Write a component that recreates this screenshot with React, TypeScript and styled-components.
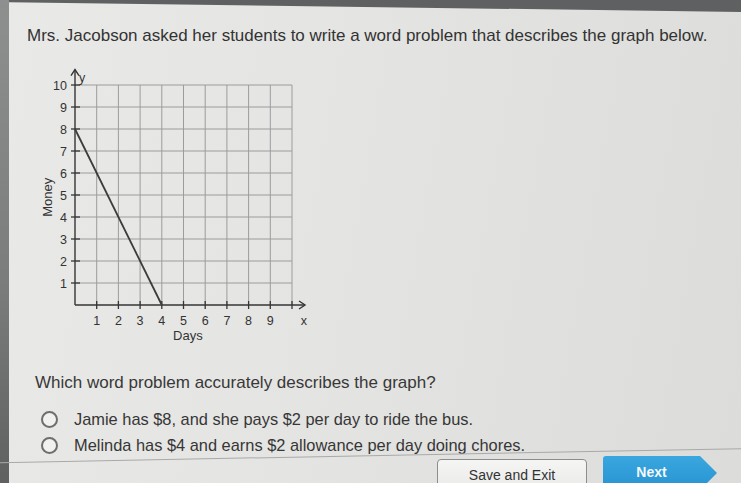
import React from 'react'
import styled, { createGlobalStyle } from 'styled-components'

const GlobalStyle = createGlobalStyle`
  html, body {
    margin: 0;
    padding: 0;
    background: #dfdfdd;
  }
  body {
    font-family: 'Liberation Sans', Arial, sans-serif;
    color: #363636;
  }
`

const Screen = styled.div`
  display: flex;
  width: 741px;
  height: 483px;
  overflow: hidden;
  background: linear-gradient(100deg, #e9e9e7 0%, #e4e4e2 45%, #dcdcda 100%);
`

// the dark monitor bezel on the left edge of the photo
const Bezel = styled.div`
  flex: 0 0 9px;
  background: linear-gradient(180deg, #8e8f8f 0%, #7a7b7b 60%, #5f6060 100%);
`

const Main = styled.div`
  flex: 1;
  display: flex;
  flex-direction: column;
  min-width: 0;

  & > * {
    flex-shrink: 0;
  }
`

const TopBand = styled.div`
  height: 12px;
  background: #5e6061;
  clip-path: polygon(0 0, 100% 0, 100% 100%, 0 18%);
`

const Title = styled.h1`
  margin: 14px 0 0 18px;
  font-size: 17px;
  line-height: 20px;
  font-weight: normal;
  color: #333;
  white-space: nowrap;
`

const GraphWrap = styled.div`
  margin: 14px 0 0 11px;
  width: 300px;
  height: 285px;
`

const Label = styled.text<{ size?: number }>`
  font-family: 'Liberation Sans', Arial, sans-serif;
  font-size: ${({ size }) => size ?? 12.5}px;
  fill: #333;
`

const Question = styled.p`
  margin: 28px 0 0 26px;
  font-size: 17px;
  line-height: 20px;
  color: #383838;
`

const Options = styled.ul`
  list-style: none;
  margin: 13px 0 0 32px;
  padding: 0;
`

const Option = styled.li`
  display: flex;
  align-items: center;
  gap: 16px;
  height: 26px;
  font-size: 16.4px;
  color: #363636;
  white-space: nowrap;
`

const Radio = styled.span`
  flex: 0 0 auto;
  width: 13px;
  height: 13px;
  border-radius: 50%;
  border: 2px solid #6e6e6e;
  background: #f1f1f0;
`

const Divider = styled.div`
  height: 1px;
  margin: -3px 0 0 -9px;
  width: 760px;
  background: #a9a9a8;
  transform: rotate(-1.08deg);
`

const Footer = styled.div`
  display: flex;
  justify-content: flex-end;
  align-items: flex-start;
  gap: 16px;
  padding-right: 24px;
`

const SaveButton = styled.button`
  margin-top: 3px;
  width: 150px;
  height: 34px;
  padding: 0 0 3px;
  border: 1px solid #8d8d8d;
  border-radius: 4px;
  background: linear-gradient(180deg, #f5f5f4, #e9e9e8);
  font-family: 'Liberation Sans', Arial, sans-serif;
  font-size: 14px;
  color: #333;
`

const NextButton = styled.button`
  width: 114px;
  height: 34px;
  padding: 0 17px 3px 0;
  border: none;
  border-radius: 3px 0 0 3px;
  background: linear-gradient(180deg, #3aa7e0 0%, #2792d0 100%);
  clip-path: polygon(0 0, calc(100% - 17px) 0, 100% 50%, calc(100% - 17px) 100%, 0 100%);
  font-family: 'Liberation Sans', Arial, sans-serif;
  font-size: 14px;
  font-weight: bold;
  color: #f4f8fb;
`

const ox = 55
const oy = 245
const ux = 21.7
const uy = 22
const steps = [1, 2, 3, 4, 5, 6, 7, 8, 9, 10]

function Graph() {
  const grid = '#9c9c9c'
  const ink = '#353535'
  const top = oy - 10.7 * uy
  const right = ox + 10.6 * ux
  const my = oy - 4.9 * uy
  return (
    <svg width="300" height="285" viewBox="0 0 300 285">
      {steps.map((i) => (
        <line key={`v${i}`} x1={ox + i * ux} y1={oy - 10 * uy} x2={ox + i * ux} y2={oy} stroke={grid} strokeWidth="1" />
      ))}
      {steps.map((j) => (
        <line key={`h${j}`} x1={ox} y1={oy - j * uy} x2={ox + 10 * ux} y2={oy - j * uy} stroke={grid} strokeWidth="1" />
      ))}
      {/* axes */}
      <line x1={ox} y1={oy} x2={right} y2={oy} stroke={ink} strokeWidth="1.4" />
      <path d={`M${right - 6} ${oy - 4} L${right} ${oy} L${right - 6} ${oy + 4}`} fill="none" stroke={ink} strokeWidth="1.4" />
      <line x1={ox} y1={oy} x2={ox} y2={top} stroke={ink} strokeWidth="1.4" />
      <path d={`M${ox - 4} ${top + 6} L${ox} ${top} L${ox + 4} ${top + 6}`} fill="none" stroke={ink} strokeWidth="1.4" />
      {steps.map((i) => (
        <line key={`tx${i}`} x1={ox + i * ux} y1={oy - 4} x2={ox + i * ux} y2={oy + 4} stroke={ink} strokeWidth="1.3" />
      ))}
      {steps.map((j) => (
        <line key={`ty${j}`} x1={ox - 4} y1={oy - j * uy} x2={ox + 5} y2={oy - j * uy} stroke={ink} strokeWidth="1.3" />
      ))}
      {/* labels */}
      {steps.map((j) => (
        <Label key={`ly${j}`} x={ox - 8} y={oy - j * uy + 4.5} textAnchor="end">
          {j}
        </Label>
      ))}
      {steps.slice(0, 9).map((i) => (
        <Label key={`lx${i}`} x={ox + i * ux} y={oy + 20} textAnchor="middle">
          {i}
        </Label>
      ))}
      <Label x={ox + 10.55 * ux} y={oy + 20} textAnchor="middle">x</Label>
      <Label x={ox + 4} y={oy - 10 * uy - 3}>y</Label>
      <Label x={ox + 5.2 * ux} y={oy + 35} textAnchor="middle" size={13}>Days</Label>
      <Label x={28} y={my} dy="4.5" textAnchor="middle" transform={`rotate(-90 28 ${my})`} size={13}>
        Money
      </Label>
      {/* the plotted line */}
      <line x1={ox} y1={oy - 8 * uy} x2={ox + 4 * ux} y2={oy} stroke="#3c3c3c" strokeWidth="1.8" />
    </svg>
  )
}

export default function App() {
  return (
    <>
      <GlobalStyle />
      <Screen>
        <Bezel />
        <Main>
          <TopBand />
          <Title>Mrs. Jacobson asked her students to write a word problem that describes the graph below.</Title>
          <GraphWrap>
            <Graph />
          </GraphWrap>
          <Question>Which word problem accurately describes the graph?</Question>
          <Options>
            <Option>
              <Radio />
              Jamie has $8, and she pays $2 per day to ride the bus.
            </Option>
            <Option>
              <Radio />
              Melinda has $4 and earns $2 allowance per day doing chores.
            </Option>
          </Options>
          <Divider />
          <Footer>
            <SaveButton>Save and Exit</SaveButton>
            <NextButton>Next</NextButton>
          </Footer>
        </Main>
      </Screen>
    </>
  )
}
